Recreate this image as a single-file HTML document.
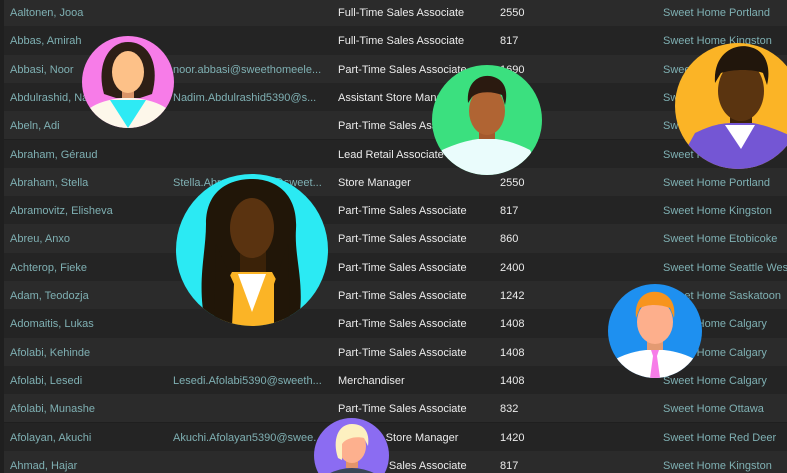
<!DOCTYPE html>
<html style="overflow:hidden;height:473px"><head><meta charset="utf-8"><style>
body{margin:0;width:787px;height:473px;overflow:hidden;background:#1f1f1f;font-family:"Liberation Sans","DejaVu Sans",sans-serif;font-size:11px;position:relative}
.r{position:absolute;left:4px;width:783px;height:28.3px}
.r.a{background:#2b2b2b}.r.b{background:#242424}
.r span{position:absolute;top:15px;transform:translateY(-50%);white-space:nowrap}
.n{left:6px;color:#7fb0b3}.e{left:169px;color:#7fb0b3}.t{left:334px;color:#ececec}.c{left:496px;color:#ececec}.s{left:659px;color:#7fb0b3}
svg{position:absolute}
</style></head><body>
<div class="r a" style="top:-2px"><span class="n">Aaltonen, Jooa</span><span class="t">Full-Time Sales Associate</span><span class="c">2550</span><span class="s">Sweet Home Portland</span></div>
<div class="r b" style="top:26.3px"><span class="n">Abbas, Amirah</span><span class="t">Full-Time Sales Associate</span><span class="c">817</span><span class="s">Sweet Home Kingston</span></div>
<div class="r a" style="top:54.6px"><span class="n">Abbasi, Noor</span><span class="e">noor.abbasi@sweethomeele...</span><span class="t">Part-Time Sales Associate</span><span class="c">1690</span><span class="s">Sweet Home Kingston</span></div>
<div class="r b" style="top:82.9px"><span class="n">Abdulrashid, Nadim</span><span class="e">Nadim.Abdulrashid5390@s...</span><span class="t">Assistant Store Manager</span><span class="s">Sweet Home Kingston</span></div>
<div class="r a" style="top:111.2px"><span class="n">Abeln, Adi</span><span class="t">Part-Time Sales Associate</span><span class="s">Sweet Home Kingston</span></div>
<div class="r b" style="top:139.5px"><span class="n">Abraham, Géraud</span><span class="t">Lead Retail Associate</span><span class="s">Sweet Home Portland</span></div>
<div class="r a" style="top:167.8px"><span class="n">Abraham, Stella</span><span class="e">Stella.Abraham5390@sweet...</span><span class="t">Store Manager</span><span class="c">2550</span><span class="s">Sweet Home Portland</span></div>
<div class="r b" style="top:196.1px"><span class="n">Abramovitz, Elisheva</span><span class="t">Part-Time Sales Associate</span><span class="c">817</span><span class="s">Sweet Home Kingston</span></div>
<div class="r a" style="top:224.4px"><span class="n">Abreu, Anxo</span><span class="t">Part-Time Sales Associate</span><span class="c">860</span><span class="s">Sweet Home Etobicoke</span></div>
<div class="r b" style="top:252.7px"><span class="n">Achterop, Fieke</span><span class="t">Part-Time Sales Associate</span><span class="c">2400</span><span class="s">Sweet Home Seattle West</span></div>
<div class="r a" style="top:281px"><span class="n">Adam, Teodozja</span><span class="t">Part-Time Sales Associate</span><span class="c">1242</span><span class="s">Sweet Home Saskatoon</span></div>
<div class="r b" style="top:309.3px"><span class="n">Adomaitis, Lukas</span><span class="t">Part-Time Sales Associate</span><span class="c">1408</span><span class="s">Sweet Home Calgary</span></div>
<div class="r a" style="top:337.6px"><span class="n">Afolabi, Kehinde</span><span class="t">Part-Time Sales Associate</span><span class="c">1408</span><span class="s">Sweet Home Calgary</span></div>
<div class="r b" style="top:365.9px"><span class="n">Afolabi, Lesedi</span><span class="e">Lesedi.Afolabi5390@sweeth...</span><span class="t">Merchandiser</span><span class="c">1408</span><span class="s">Sweet Home Calgary</span></div>
<div class="r a" style="top:394.2px"><span class="n">Afolabi, Munashe</span><span class="t">Part-Time Sales Associate</span><span class="c">832</span><span class="s">Sweet Home Ottawa</span></div>
<div class="r b" style="top:422.5px"><span class="n">Afolayan, Akuchi</span><span class="e">Akuchi.Afolayan5390@swee...</span><span class="t">Assistant Store Manager</span><span class="c">1420</span><span class="s">Sweet Home Red Deer</span></div>
<div class="r a" style="top:450.8px"><span class="n">Ahmad, Hajar</span><span class="t">Part-Time Sales Associate</span><span class="c">817</span><span class="s">Sweet Home Kingston</span></div>

<svg style="left:82px;top:36px" width="92" height="92" viewBox="0 0 92 92"><defs><clipPath id="c1"><circle cx="46" cy="46" r="46"/></clipPath></defs><g clip-path="url(#c1)">
<rect width="92" height="92" fill="#f77ce8"/>
<path d="M22 58 C14 30 26 6 46 6 C68 6 78 30 70 58 L58 62 L34 62 Z" fill="#2e1f16"/>
<rect x="40" y="50" width="12" height="14" fill="#d99468"/>
<ellipse cx="46" cy="36" rx="16" ry="21" fill="#fdc188"/>
<path d="M0 92 L8 72 Q20 64 40 62 L52 62 Q72 64 84 72 L92 92Z" fill="#fdf7ea"/>
<path d="M28 64 L64 64 L46 92Z" fill="#2eeaf4"/>
</g></svg>

<svg style="left:432px;top:65px" width="110" height="110" viewBox="0 0 110 110"><defs><clipPath id="c2"><circle cx="55" cy="55" r="55"/></clipPath></defs><g clip-path="url(#c2)">
<rect width="110" height="110" fill="#3be07f"/>
<rect x="47" y="60" width="16" height="24" fill="#a4592d"/>
<ellipse cx="55" cy="46" rx="18" ry="24" fill="#b06433"/>
<path d="M36 38 C34 15 50 8 62 12 C74 16 76 28 73 40 L70 30 C60 26 46 26 40 32Z" fill="#2b1a10"/>
<path d="M0 110 L10 85 Q30 76 46 74 L64 74 Q80 76 98 85 L110 110Z" fill="#eafcfc"/>
</g></svg>

<svg style="left:675px;top:43px" width="126" height="126" viewBox="0 0 126 126"><defs><clipPath id="c3"><circle cx="63" cy="63" r="63"/></clipPath></defs><g clip-path="url(#c3)">
<rect width="126" height="126" fill="#fbb426"/>
<rect x="55" y="60" width="22" height="30" fill="#3d230b"/>
<ellipse cx="66" cy="48" rx="23" ry="30" fill="#5a3410"/>
<path d="M40 40 C38 10 60 0 75 4 C92 8 96 26 92 42 L88 30 C78 26 58 26 46 30Z" fill="#21160c"/>
<path d="M0 126 L20 90 Q40 80 56 80 L78 80 Q100 84 130 100 L130 126Z" fill="#7456d4"/>
<path d="M50 82 L80 82 L66 106Z" fill="#fff"/>
</g></svg>

<svg style="left:176px;top:174px" width="152" height="152" viewBox="0 0 152 152"><defs><clipPath id="c4"><circle cx="76" cy="76" r="76"/></clipPath></defs><g clip-path="url(#c4)">
<rect width="152" height="152" fill="#2beaf3"/>
<path d="M30 152 C20 110 30 80 30 50 C30 15 55 5 76 5 C100 5 122 20 120 55 C118 85 130 110 122 152Z" fill="#211608"/>
<rect x="64" y="70" width="26" height="30" fill="#3b2208"/>
<ellipse cx="76" cy="54" rx="22" ry="30" fill="#5a3310"/>
<path d="M44 120 L56 98 L96 98 L108 120 L108 152 L44 152Z" fill="#fbb426"/>
<path d="M62 100 L90 100 L76 138Z" fill="#fff"/>
<path d="M38 152 L40 70 L58 110 L56 152Z M114 152 L112 70 L98 110 L98 152Z" fill="#211608"/>
</g></svg>

<svg style="left:608px;top:284px" width="94" height="94" viewBox="0 0 94 94"><defs><clipPath id="c5"><circle cx="47" cy="47" r="47"/></clipPath></defs><g clip-path="url(#c5)">
<rect width="94" height="94" fill="#1e90f0"/>
<rect x="39" y="48" width="16" height="22" fill="#e39a72"/>
<ellipse cx="47" cy="38" rx="18" ry="22" fill="#fdaf8c"/>
<path d="M28 34 C26 14 38 6 50 8 C62 10 68 20 66 34 L62 24 C52 20 40 20 32 24Z" fill="#f7941d"/>
<path d="M0 94 L6 76 Q20 68 38 66 L56 66 Q74 68 88 76 L94 94Z" fill="#fff"/>
<path d="M43 66 L51 66 L49 72 L52 94 L42 94 L45 72Z" fill="#f77ce8"/>
</g></svg>

<svg style="left:314px;top:418px" width="75" height="75" viewBox="0 0 75 75"><defs><clipPath id="c6"><circle cx="37.5" cy="37.5" r="37.5"/></clipPath></defs><g clip-path="url(#c6)">
<rect width="75" height="75" fill="#8b6cf2"/>
<rect x="32" y="36" width="12" height="14" fill="#e3946b"/>
<ellipse cx="38" cy="28" rx="14" ry="17" fill="#fdb08e"/>
<path d="M24 40 C18 22 24 6 38 6 C50 6 56 14 54 28 L50 20 C42 18 32 20 28 26 L28 42Z" fill="#fdf0c0"/>
<path d="M8 75 L14 56 Q26 50 38 50 Q50 50 62 56 L68 75Z" fill="#3a4656"/>
</g></svg>
</body></html>
